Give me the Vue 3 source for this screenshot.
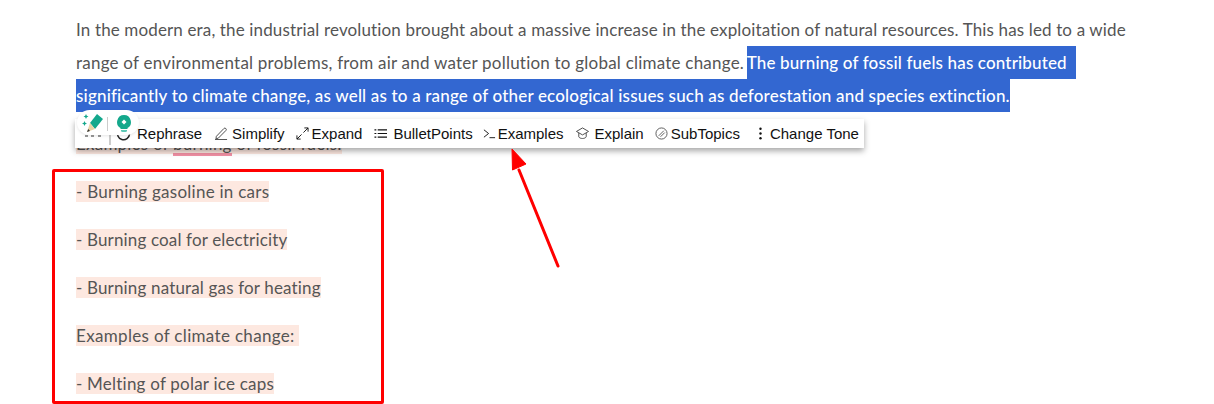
<script setup>
const items = [
  { label: 'Rephrase', icon: 'rephrase' },
  { label: 'Simplify', icon: 'simplify' },
  { label: 'Expand', icon: 'expand' },
  { label: 'BulletPoints', icon: 'list' },
  { label: 'Examples', icon: 'terminal' },
  { label: 'Explain', icon: 'cap' },
  { label: 'SubTopics', icon: 'slash' },
  { label: 'Change Tone', icon: 'dots' }
]
const bullets = [
  { text: '- Burning gasoline in cars', track: 0.26 },
  { text: '- Burning coal for electricity', track: 0.15 },
  { text: '- Burning natural gas for heating', track: 0.16 },
  { text: 'Examples of climate change:\u00a0', track: 0.33 },
  { text: '- Melting of polar ice caps', track: 0.22 }
]
</script>

<template>
  <div class="page">
    <article class="doc">
      <div class="para">
        <div class="line l1">In the modern era, the industrial revolution brought about a massive increase in the exploitation of natural resources. This has led to a wide</div>
        <div class="line l2">range of environmental problems, from air and water pollution to global climate change.&nbsp;<span class="sel s1">The burning of fossil fuels has contributed</span></div>
        <div class="line l3"><span class="sel">significantly to climate change, as well as to a range of other ecological issues such as deforestation and species extinction.</span></div>
      </div>
      <div class="para"><div class="line"><span class="hl">Examples of <span class="err">burning</span> of fossil fuels:</span></div></div>
      <div v-for="b in bullets" :key="b.text" class="para">
        <div class="line" :style="{ letterSpacing: b.track + 'px' }"><span class="hl">{{ b.text }}</span></div>
      </div>
    </article>

    <div class="toolbar">
      <svg class="lead" width="58" height="29" viewBox="0 0 58 29" fill="none">
        <path d="M10 17h3M16 17h3M23 17h3" stroke="#777" stroke-width="1.500" />
        <path d="M35 15v11" stroke="#999" />
        <path d="M54.500 15a6 6 0 1 1-1.800-4.500L54.500 12.500M54.500 9v4h-4" stroke="#222" stroke-width="1.500" />
      </svg>
      <button v-for="it in items" :key="it.label" class="tool" :class="'t-' + it.icon">
        <svg v-if="it.icon !== 'rephrase'" class="ic" viewBox="0 0 14 14" fill="none" stroke="#444" stroke-width="1">
          <template v-if="it.icon === 'simplify'">
            <path d="M1.500 10 9.500 1.700a1.300 1.300 0 0 1 2.200 2.100L3.600 12 1 12.800zM0 13.500h13" />
          </template>
          <template v-else-if="it.icon === 'expand'">
            <path d="M8 6l5-5M9 1h4v4M6 8l-5 5M1 9v4h4" stroke="#111" />
          </template>
          <template v-else-if="it.icon === 'list'">
            <path d="M4 3h10M4 7h10M4 11h10" stroke="#111" stroke-width="1.300" />
            <path d="M0.500 3h2M0.500 7h2M0.500 11h2" stroke="#111" stroke-width="1.300" />
          </template>
          <template v-else-if="it.icon === 'terminal'">
            <path d="M1 3l5 4-5 4M7 11.500h6" stroke="#111" />
          </template>
          <template v-else-if="it.icon === 'cap'">
            <path d="M7 1 13.500 4.800 7 8.500 .5 4.800zM3 6.500v4C4 13 10 13 11 10.500v-4" stroke="#444" />
          </template>
          <template v-else-if="it.icon === 'slash'">
            <circle cx="7" cy="7" r="6" stroke="#555" />
            <path d="M4 9.500 9.500 4M6 10.500l4.500-4.500" stroke="#555" />
          </template>
          <template v-else-if="it.icon === 'dots'">
            <circle cx="7" cy="1.800" r="1.300" fill="#111" stroke="none" />
            <circle cx="7" cy="7" r="1.300" fill="#111" stroke="none" />
            <circle cx="7" cy="12.200" r="1.300" fill="#111" stroke="none" />
          </template>
        </svg>
        <span>{{ it.label }}</span>
      </button>
    </div>

    <div class="pill">
      <svg class="wand" width="21" height="18" viewBox="0 0 21 18">
        <path d="M15 0 21 5 13 15 8 9z" fill="#14a88c" />
        <path d="M8 9 13 15 5 18z" fill="#e9d3a6" />
        <path d="M6.200 15 8 17 5 18z" fill="#333" />
        <path d="M4 0l.8 1.700 1.700.8-1.700.8L4 5l-.8-1.700-1.700-.8 1.700-.8zM2.500 7l.8 1.700L5 9.500l-1.700.8-.8 1.700-.8-1.700L0 9.500l1.700-.8z" fill="#14a88c" />
      </svg>
      <span class="sep"></span>
      <svg class="bulb" width="14" height="17" viewBox="0 0 14 17">
        <path d="M7 0a7 7 0 0 0-3.500 13v1h7v-1A7 7 0 0 0 7 0z" fill="#14a88c" />
        <path d="M4 15h6v.500a1.500 1.500 0 0 1-1.500 1.500h-3A1.500 1.500 0 0 1 4 15.500z" fill="#5cc8b4" />
        <path d="M7 4.500 9.500 7 7 9.500 4.500 7z" fill="#fff" />
      </svg>
    </div>

    <div class="frame"></div>

    <svg class="arrow" width="60" height="125" viewBox="0 0 60 125">
      <path d="M47 118 8 22" stroke="#ff0000" stroke-width="3" stroke-linecap="round" fill="none" />
      <path d="M1 1 1.500 22 15 16z" fill="#ff0000" stroke="#ff0000" stroke-width="1" />
    </svg>
  </div>
</template>

<style scoped>
.page {
  position: relative;
  width: 1214px;
  height: 404px;
  overflow: hidden;
  background: #fff;
}
.doc {
  padding: 13px 0 0 76px;
  font-family: Lato, "Open Sans", sans-serif;
  font-size: 17px;
  color: #555;
}
.para { margin-bottom: 15px; }
.line {
  height: 33px;
  line-height: 33px;
  white-space: nowrap;
  letter-spacing: .22px;
}
.l1 { letter-spacing: .14px; }
.l3 { letter-spacing: .18px; }
.sel {
  display: inline-block;
  background: #3367d1;
  color: #fff;
  font-weight: 500;
}
.s1 { margin-left: -2px; padding-right: 9px; letter-spacing: .15px; }
.hl { background: #fde8e0; }
.err { position: relative; }
.err::after {
  content: "";
  position: absolute;
  left: 0;
  right: 0;
  bottom: -2px;
  height: 3px;
  background: #f08fa3;
}

.toolbar {
  position: absolute;
  left: 75px;
  top: 119px;
  width: 789px;
  height: 29px;
  display: flex;
  align-items: center;
  background: #fff;
  box-shadow: 0 3px 6px rgba(0, 0, 0, .35);
  font-family: "Liberation Sans", Arial, sans-serif;
  font-size: 15px;
  color: #111;
}
.lead { flex: none; }
.tool {
  display: flex;
  align-items: center;
  padding: 0;
  border: 0;
  background: none;
  font: inherit;
  color: inherit;
  white-space: nowrap;
}
.ic { width: 13px; height: 13px; flex: none; }
.t-rephrase { margin-left: 4px; }
.t-simplify { margin-left: 13px; gap: 4px; }
.t-expand { margin-left: 11px; gap: 3px; }
.t-list { margin-left: 12px; gap: 6px; }
.t-terminal { margin-left: 10px; gap: 2px; }
.t-cap { margin-left: 12px; gap: 6px; }
.t-slash { margin-left: 11px; gap: 3px; }
.t-dots { margin-left: 14px; gap: 3px; }

.pill {
  position: absolute;
  left: 77px;
  top: 110px;
  width: 62px;
  height: 25px;
  display: flex;
  align-items: center;
  box-sizing: border-box;
  padding-left: 5px;
  background: #fff;
  border-radius: 13px;
  box-shadow: 0 1px 3px rgba(0, 0, 0, .1);
}
.wand { flex: none; margin-top: 1px; }
.sep { flex: none; width: 1px; height: 14px; margin: 3px 9px 0 4px; background: #ccc; }
.bulb { flex: none; margin-top: 2px; }

.frame {
  position: absolute;
  left: 52px;
  top: 169px;
  width: 332px;
  height: 235px;
  box-sizing: border-box;
  border: 3px solid #ff0000;
  border-radius: 2px;
}
.arrow {
  position: absolute;
  left: 511px;
  top: 148px;
}
</style>
